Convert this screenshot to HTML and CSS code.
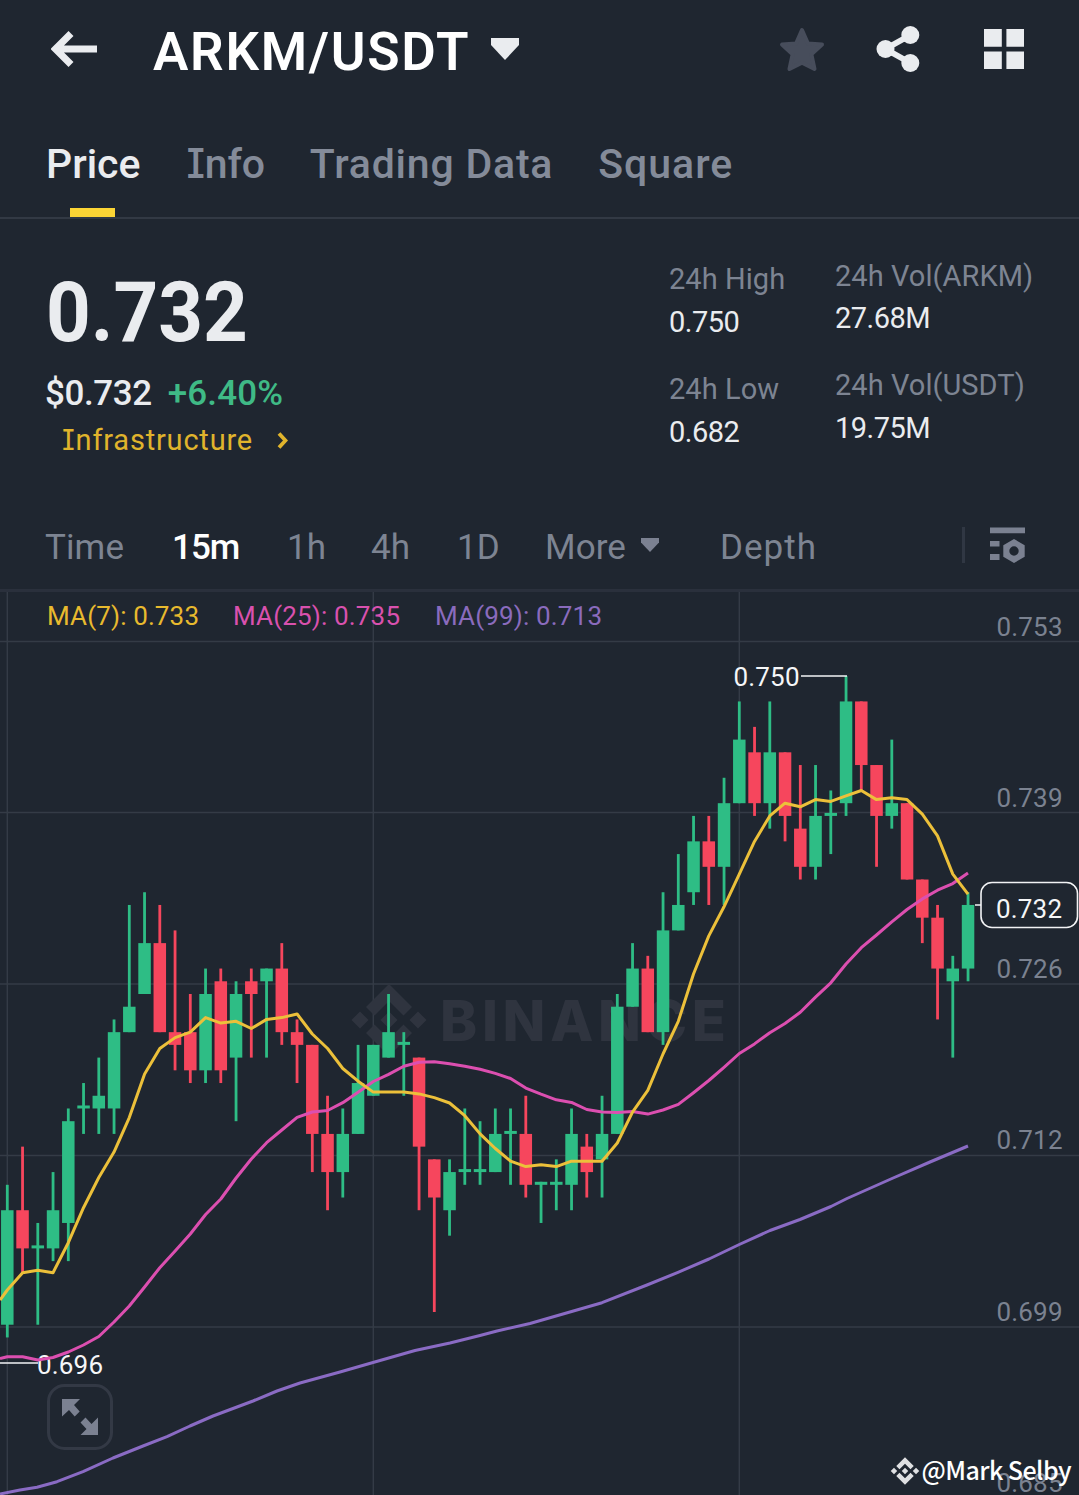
FILE: index.html
```html
<!DOCTYPE html>
<html lang="en">
<head>
<meta charset="utf-8">
<title>ARKM/USDT</title>
<link rel="stylesheet" href="styles.css">
</head>
<body>
<header class="topbar">
  <svg class="back" width="46" height="36" viewBox="0 0 46 36"><path d="M20 2.500 4.500 18l15.500 15.500M4 18h42" fill="none" stroke="#eaecef" stroke-width="7"/></svg>
  <h1 class="pair">ARKM/USDT</h1>
  <svg class="pair-caret" width="28" height="22" viewBox="0 0 28 22"><path d="M0 0h28v7L14 22 0 7z" fill="#eaecef"/></svg>
  <div class="actions">
    <svg class="star" width="46" height="46" viewBox="0 0 46 46"><path d="M23 3l5.800 13.400 14.200 1.200-10.600 9.800L35.500 42 23 35.600 10.500 42l3.100-14.600L3 17.600l14.200-1.200z" fill="#474d5b" stroke="#474d5b" stroke-width="4" stroke-linejoin="round"/></svg>
    <svg width="44" height="46" viewBox="0 0 44 46"><path d="M34.500 9 9.500 23l25 14" fill="none" stroke="#eaecef" stroke-width="6"/><g fill="#eaecef"><circle cx="34.300" cy="9" r="9"/><circle cx="9.500" cy="23" r="9"/><circle cx="34.300" cy="37" r="9"/></g></svg>
    <svg width="40" height="40" viewBox="0 0 40 40"><path d="M0 0h17.800v17.800H0zM22.400 0H40v17.800H22.400zM0 22.400h17.800V40H0zM22.400 22.400H40V40H22.400z" fill="#eaecef"/></svg>
  </div>
</header>
<nav class="tabs">
  <a class="tab tab-active">Price</a>
  <a class="tab tab-info"><span class="slab">I</span>nfo</a>
  <a class="tab tab-data">Trading Data</a>
  <a class="tab tab-square">Square</a>
</nav>
<section class="summary">
  <div class="quote">
    <div class="last">0.732</div>
    <div class="fiat"><span class="usd">$0.732</span><span class="change">+6.40%</span></div>
    <a class="sector"><span><span class="slab">I</span>nfrastructure</span><svg width="11" height="17" viewBox="0 0 11 17"><path d="M2 1.500l6.500 7L2 15.500" fill="none" stroke="#e0b42c" stroke-width="3.800"/></svg></a>
  </div>
  <dl class="stats stats-range">
    <dt>24h High</dt><dd>0.750</dd>
    <dt>24h Low</dt><dd>0.682</dd>
  </dl>
  <dl class="stats stats-volume">
    <dt>24h Vol(ARKM)</dt><dd>27.68M</dd>
    <dt>24h Vol(USDT)</dt><dd>19.75M</dd>
  </dl>
</section>
<nav class="intervals">
  <a class="iv iv-time">Time</a>
  <a class="iv iv-15 iv-active">15m</a>
  <a class="iv iv-1h">1h</a>
  <a class="iv iv-4h">4h</a>
  <a class="iv iv-1d">1D</a>
  <a class="iv iv-more">More<svg width="18" height="14" viewBox="0 0 18 14"><path d="M0 0h18v4.500L9 14 0 4.500z" fill="#7b8191"/></svg></a>
  <a class="iv iv-depth">Depth</a>
  <span class="divider"></span>
  <svg class="settings" width="35" height="36" viewBox="0 0 35 36"><path d="M0 .5h35v5.700H0zM0 14h9.500v5.500H0zM0 27h9.500v6H0z" fill="#7b8191"/><path fill-rule="evenodd" d="M24 12l10.700 6.200v11.600L24 36l-10.700-6.200V18.200zM24 19.300a4.700 4.700 0 1 0 0 9.400 4.700 4.700 0 0 0 0-9.400z" fill="#7b8191"/></svg>
</nav>
<main class="chart">
  <svg id="plot" width="1079" height="903" viewBox="0 592 1079 903">
    <defs>
      <g id="mark">
        <path d="M0-36 23-13 14.500-4.500 0-19-14.500-4.500-23-13zM0 36 23 13 14.500 4.500 0 19-14.500 4.500-23 13zM-29-8.500-20.500 0-29 8.500-37.500 0zM29-8.500 37.500 0 29 8.500 20.500 0zM0-8.500 8.500 0 0 8.500-8.500 0z"/>
      </g>
    </defs>
    <path class="grid" d="M0 641.500h1079M0 812.500h1079M0 984h1079M0 1155.500h1079M0 1327h1079M7.300 592v903M373.300 592v903M739.300 592v903"/>
    <g class="watermark"><use href="#mark" x="389" y="1020"/><text x="440" y="1041" textLength="286">BINANCE</text></g>
    <g id="candles"></g>
    <path class="leader" d="M801 676h46M975 905h6M0 1363h38"/>
    <g class="note"><text x="733.500" y="686" textLength="66">0.750</text><text x="37" y="1374" textLength="66">0.696</text></g>
    <g class="ma" id="averages"></g>
    <g class="axis">
      <text x="996.500" y="636" textLength="66">0.753</text>
      <text x="996.500" y="807" textLength="66">0.739</text>
      <text x="996.500" y="978" textLength="66">0.726</text>
      <text x="996.500" y="1149" textLength="66">0.712</text>
      <text x="996.500" y="1321" textLength="66">0.699</text>
      <text x="996.500" y="1492" textLength="66">0.685</text>
    </g>
    <rect class="tag" x="981" y="882.500" width="96.500" height="45" rx="11"/>
    <text class="tag-text" x="996" y="918" textLength="66">0.732</text>
    <g class="legend">
      <text x="47" y="625" fill="#e8ba2e" textLength="152">MA(7): 0.733</text>
      <text x="233" y="625" fill="#d951ae" textLength="167">MA(25): 0.735</text>
      <text x="435" y="625" fill="#8a6bbd" textLength="167">MA(99): 0.713</text>
    </g>
    <rect class="expand" x="48.500" y="1385.500" width="63" height="63" rx="16"/>
    <path d="M62 1399h18l-6 6 5.700 6.500-5 5-5.700-6.500-7 6.500zM98 1435H80.500l6-6-6-6.500 5-5 6 6.500 6.500-6.500z" fill="#7b8191"/>
    <use href="#mark" transform="translate(905 1471) scale(.38)" fill="#dfe0e2"/>
    <text class="author" x="921.500" y="1480" textLength="150">@Mark Selby</text>
  </svg>
</main>
<script src="chart.js"></script>
</body>
</html>
```
FILE: styles.css
```css
* { box-sizing: border-box; }
body { margin: 0; background: #1f2630; color: #eaecef; font-family: Roboto, "Liberation Sans", sans-serif; width: 1079px; overflow: hidden; }
svg { display: block; flex: none; }
.slab { font-family: Inter, sans-serif; font-feature-settings: "cv08", "ss02"; }

.topbar { display: flex; align-items: center; height: 98px; padding: 0 55px 0 51px; }
.pair { margin: 0 0 0 56px; padding-top: 6px; width: 316px; font-size: 53px; line-height: 60px; font-weight: 600; color: #fff; letter-spacing: 1.7px; white-space: nowrap; }
.pair-caret { margin-left: 22px; }
.actions { display: flex; align-items: center; margin-left: auto; }
.star { margin: 2px -1px 0 1px; }
.actions svg + svg { margin-left: 52px; }
.actions svg:last-child { margin-left: 64px; }

.tabs { display: flex; align-items: center; gap: 45px; height: 121px; padding: 12px 46px 0; border-bottom: 2px solid #323944; font-size: 41px; line-height: 48px; font-weight: 500; color: #848b99; white-space: nowrap; }
.tab-info { letter-spacing: -.2px; padding-left: 1px; }
.tab-data { letter-spacing: .8px; }
.tab-square { letter-spacing: 1px; }
.tab-active { color: #eaecef; position: relative; }
.tab-active::after { content: ""; position: absolute; left: 24px; top: 68px; width: 45px; height: 9px; background: #fcd535; }

.summary { display: flex; height: 281px; padding: 0 0 0 46px; }
.quote { width: 623px; padding-top: 46px; }
.last { font-size: 83px; line-height: 96px; font-weight: 700; transform: scaleX(.94); transform-origin: 0 50%; }
.fiat { display: flex; gap: 16px; margin-top: 13px; font-size: 35px; line-height: 40px; font-weight: 500; }
.usd { letter-spacing: -.4px; margin-left: -1px; }
.change { color: #3fba86; letter-spacing: .1px; }
.sector { display: flex; align-items: center; gap: 24px; margin: 9px 0 0 16px; font-size: 29px; line-height: 34px; color: #e0b42c; letter-spacing: .8px; }
.stats { margin: 0; font-size: 29px; line-height: 34px; white-space: nowrap; }
.stats dt { color: #7d8492; letter-spacing: .05px; }
.stats dd { margin: 9px 0 33px; letter-spacing: -.5px; }
.stats-range { width: 166px; padding-top: 43px; }
.stats-volume { padding-top: 40px; }
.stats-volume dd { margin-top: 8px; }
.stats-volume dd:last-child { margin-top: 9px; }

.intervals { display: flex; align-items: center; height: 92px; padding: 6px 54px 0 45px; border-bottom: 3px solid #2a303c; font-size: 35px; line-height: 40px; color: #7d8492; white-space: nowrap; }
.iv { letter-spacing: .1px; }
.iv-active { color: #fff; font-weight: 500; letter-spacing: -1px; }
.iv-time { width: 127px; }
.iv-15 { width: 115px; }
.iv-1h { width: 84px; }
.iv-4h { width: 86px; }
.iv-1d { width: 88px; }
.iv-more { display: flex; align-items: center; gap: 15px; width: 175px; }
.iv-more svg { margin-top: -6px; }
.iv-depth { letter-spacing: 1px; }
.divider { width: 3px; height: 36px; margin: -6px 0 0 auto; background: #303743; }
.settings { margin: -6px 0 0 25px; }

.grid { stroke: #343b46; stroke-width: 1.5; fill: none; }
.watermark { fill: #2f343f; font: 800 56px Inter, sans-serif; }
.leader { stroke: #f2f3f5; stroke-width: 1.6; fill: none; }
.note, .axis, .legend, .tag-text { font-size: 26px; }
.note, .tag-text { fill: #f5f6f8; }
.axis { fill: #7b8290; }
.tag { fill: #1f2630; stroke: #f2f3f5; stroke-width: 1.6; }
.expand { fill: none; stroke: #333945; stroke-width: 3; }
.author { fill: #fff; font: 500 25px "Noto Sans CJK SC", sans-serif; }
.up { fill: #2ebd85; }
.down { fill: #f6465d; }
.ma path { fill: none; stroke-width: 3; stroke-linejoin: round; }
.ma .ma7 { stroke: #ecc03a; }
.ma .ma25 { stroke: #dc4fb0; }
.ma .ma99 { stroke: #8a6bc4; }
```
FILE: chart.js
```js
// Each candle: direction, high, body top, body bottom, low, in 0.001 steps below 0.750.
const candles = `
u40,42,51,52 d37,42,45,47 u43,45,45,51 u39,42,45,46 u34,35,43,46 u32,34,34,36 u30,33,34,36 u27,28,34,36
u18,26,28,28 u17,21,25,25 d18,21,28,28 d20,28,29,31 d25,28,31,32 u23,25,31,32 d23,24,31,32 u24,25,30,35
d23,24,25,30 u23,23,24,30 d21,23,28,29 d27,28,29,32 d29,29,36,39 d33,36,39,42 u34,36,39,41 u29,32,36,36
u29,29,33,33 u25,28,30,30 u28,29,29,33 d30,30,37,42 d38,38,41,50 u38,39,42,44 u34,39,39,40 u35,39,39,40
u34,36,39,39 u34,36,36,40 d33,36,40,41 u40,40,40,43 u38,40,40,42 u34,36,40,42 d36,37,39,41 u33,36,38,41
u25,26,36,36 u21,23,26,26 d22,23,28,28 u17,20,28,29 u14,18,20,20 u11,13,17,18 d11,13,15,18 u8,10,15,18
u2,5,10,10 d4,6,10,11 u2,6,10,12 d6,6,11,13 d7,12,15,16 u7,11,15,16 u9,11,11,14 u0,2,10,11
d2,2,7,9 d7,7,11,15 u5,10,11,12 d10,10,16,16 d16,16,19,21 d18,19,23,27 u22,23,24,30 u17,18,23,24
`.trim().split(/\s+/).map(s => ({ up: s[0] === "u", v: s.slice(1).split(",").map(Number) }));

const X = i => 7.3 + 15.25 * i;
const Y = k => 676 + 12.72 * k;
const rect = (c, x, y, w, h) => `<rect class="${c}" x="${x.toFixed(2)}" y="${y.toFixed(2)}" width="${w}" height="${h.toFixed(2)}"/>`;

document.getElementById("candles").innerHTML = candles.map(({ up, v: [hi, top, bottom, lo] }, i) => {
  const c = up ? "up" : "down";
  const body = Math.max(3, Y(bottom) - Y(top));
  const y = top === bottom ? Y(bottom) - 3 : Y(top);
  return rect(c, X(i) - 1.4, Math.min(Y(hi), y), 2.8, Y(lo) - Math.min(Y(hi), y)) + rect(c, X(i) - 6.25, y, 12.5, body);
}).join("");

// Averages reach back before the first visible candle, so their opening points are listed.
const close = candles.map(({ up, v }) => up ? v[1] : v[2]);
function average(n, lead, edge) {
  const pts = [[0, edge]];
  for (let i = 0; i < close.length; i++) {
    const y = i < n - 1 ? lead[i] : Y(close.slice(i - n + 1, i + 1).reduce((a, b) => a + b) / n);
    pts.push([X(i), y]);
  }
  return pts;
}
const line = (c, pts) => `<path class="${c}" d="M${pts.map(p => p[0].toFixed(1) + " " + p[1].toFixed(1)).join("L")}"/>`;
document.getElementById("averages").innerHTML =
  line("ma99", [[0,1494],[20,1490],[37,1487.3],[57,1481.7],[83,1471.7],[113,1458],[143,1446],[167,1436.7],[190,1426],[213,1416],[237,1407],[253,1401],[277,1391],[300,1383],[340,1372],[373,1362.5],[415,1350.5],[450,1343],[480,1335.5],[497,1331],[530,1323.5],[602,1302.7],[647,1285],[678,1272.3],[709,1259],[739.3,1244.5],[770,1230.5],[800,1219.5],[831,1206.5],[847,1198.5],[892,1178.5],[930,1162],[968,1146]]) +
  line("ma25", average(25, [1356.7,1356.7,1360,1357.5,1352,1345,1336.5,1322,1306,1287,1267.7,1251,1234,1214.5,1199,1178,1159,1142.7,1130,1117.3,1112,1110.5,1102.7,1092.3], 1358.5)) +
  line("ma7", average(7, [1290,1272.7,1270.3,1272.7,1242.7,1207.7], 1300));
```
